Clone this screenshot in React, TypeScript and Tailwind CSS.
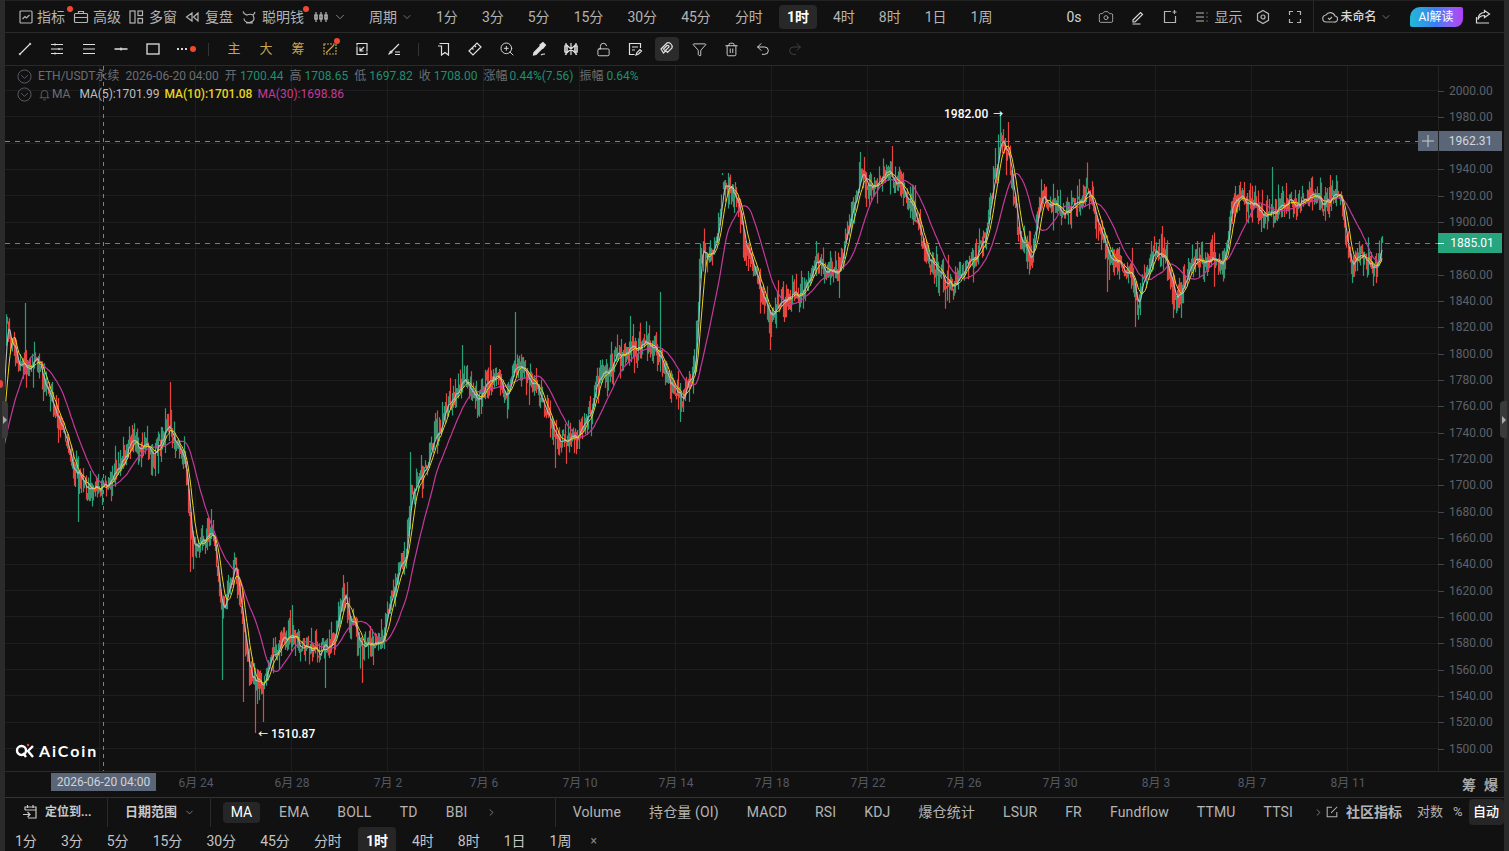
import { ReactNode } from 'react'
import { ChevronDown, ChevronRight, Undo2, Redo2, Trash2, Funnel, Camera, ZoomIn, LockOpen } from 'lucide-react'

// price path traced in page pixels
const PATH: [number, number][] = [
  [-30, 470], [0, 440], [6, 315], [12, 345], [22, 368], [35, 362], [50, 395], [62, 425], [75, 472], [92, 497], [110, 475], [130, 440], [150, 447], [170, 425], [185, 470], [192, 545], [212, 525], [222, 612], [235, 570], [250, 672], [262, 678], [275, 650], [292, 635], [310, 650], [330, 650], [343, 590], [360, 650], [380, 650], [392, 590], [405, 560], [412, 490], [425, 470], [445, 410], [465, 375], [478, 400], [495, 375], [505, 390], [520, 365], [535, 380], [555, 440], [570, 435], [585, 425], [600, 370], [630, 350], [655, 345], [670, 380], [682, 405], [695, 370], [700, 260], [715, 250], [723, 185], [738, 200], [745, 245], [760, 290], [770, 312], [785, 295], [800, 292], [815, 260], [838, 270], [860, 175], [875, 190], [890, 170], [910, 195], [925, 255], [945, 282], [960, 280], [985, 240], [1000, 140], [1008, 150], [1020, 240], [1032, 255], [1040, 200], [1065, 215], [1088, 195], [1110, 265], [1130, 265], [1137, 300], [1150, 255], [1165, 250], [1175, 295], [1190, 265], [1225, 260], [1232, 205], [1265, 215], [1290, 197], [1340, 195], [1350, 260], [1365, 255], [1373, 270], [1382, 245],
]

// wicks that stick out of the trace
const SPIKES: [number, number, number][] = [
  [25, 303, 1], [58, 398, 0], [78, 522, 1], [170, 382, 0], [190, 572, 0], [222, 680, 1], [243, 702, 0], [255, 733, 0], [263, 722, 0], [292, 605, 1], [325, 688, 1], [343, 575, 0], [362, 683, 0], [410, 452, 1], [462, 345, 1], [490, 345, 0], [515, 312, 1], [555, 468, 0], [630, 316, 1], [660, 292, 1], [680, 422, 1], [722, 175, 1], [770, 350, 0], [860, 152, 1], [892, 146, 0], [938, 293, 1], [1000, 112, 1], [1008, 122, 0], [1032, 268, 0], [1107, 292, 0], [1135, 327, 0], [1162, 226, 0], [1173, 318, 0], [1272, 167, 1], [1330, 175, 0], [1373, 286, 1],
]

const buildChart = () => {
  let seed = 7
  const rnd = () => {
    seed = (seed * 16807) % 2147483647
    return seed / 2147483647
  }
  const at = (x: number) => {
    for (let i = 1; i < PATH.length; i++) {
      if (x <= PATH[i][0]) {
        const [x0, y0] = PATH[i - 1]
        const [x1, y1] = PATH[i]
        return y0 + ((y1 - y0) * (x - x0)) / (x1 - x0)
      }
    }
    return PATH[PATH.length - 1][1]
  }
  const closes: number[] = []
  let wander = 0
  for (let x = -30; x <= 1382; x++) {
    wander = wander * 0.9 + (rnd() - 0.5) * 5
    closes.push(at(x) + wander + (rnd() - 0.5) * 15)
  }
  const ma = (n: number) => {
    let d = ''
    for (let i = 30; i < closes.length; i++) {
      const part = closes.slice(Math.max(0, i - n + 1), i + 1)
      const v = part.reduce((a, b) => a + b, 0) / part.length
      d += `${i === 30 ? 'M' : 'L'}${i - 30} ${v.toFixed(1)}`
    }
    return d
  }
  let green = ''
  let red = ''
  for (let i = 36; i < closes.length; i++) {
    const x = i - 30 + 0.5
    let top = Math.min(closes[i], closes[i - 1]) - rnd() * rnd() * 24
    let bottom = Math.max(closes[i], closes[i - 1]) + rnd() * rnd() * 24
    let isUp = closes[i] < closes[i - 1]
    const spike = SPIKES.find((s) => s[0] === i - 30)
    if (spike) {
      if (spike[1] < top) top = spike[1]
      else bottom = spike[1]
      isUp = spike[2] === 1
    }
    const seg = `M${x} ${top.toFixed(1)}V${bottom.toFixed(1)}`
    if (isUp) green += seg
    else red += seg
  }
  return { green, red, ma5: ma(5), ma10: ma(10), ma30: ma(30) }
}

const chart = buildChart()
const priceLabels = Array.from({ length: 26 }, (_, i) => 2000 - i * 20).filter((p) => p !== 1960 && p !== 1880)
const priceY = (p: number) => 90.5 + ((2000 - p) / 20) * 26.32
const dateLabels = ['6月 24', '6月 28', '7月 2', '7月 6', '7月 10', '7月 14', '7月 18', '7月 22', '7月 26', '7月 30', '8月 3', '8月 7', '8月 11']
const topPeriods = ['1分', '3分', '5分', '15分', '30分', '45分', '分时', '1时', '4时', '8时', '1日', '1周']
const subIndicators = ['Volume', '持仓量 (OI)', 'MACD', 'RSI', 'KDJ', '爆仓统计', 'LSUR', 'FR', 'Fundflow', 'TTMU', 'TTSI']

const Ico = ({ children, className = '' }: { children: ReactNode; className?: string }) => (
  <svg viewBox="0 0 16 16" fill="none" stroke="currentColor" strokeWidth="1.2" className={`w-4 h-4 shrink-0 ${className}`}>
    {children}
  </svg>
)

const Dot = ({ className }: { className: string }) => <span className={`absolute w-[6px] h-[6px] rounded-full bg-[#f0492e] ${className}`} />

const ToolBtn = ({ children, active }: { children: ReactNode; active?: boolean }) => (
  <div className="relative w-8 h-6 shrink-0 flex items-center justify-center text-[#e0e0e0]">
    {active && <span className="absolute left-1 top-0 w-6 h-6 rounded bg-[#2b2b2b]" />}
    <span className="relative">{children}</span>
  </div>
)

const Legend = ({ children }: { children: ReactNode }) => (
  <div className="flex items-center h-[18px] whitespace-nowrap">{children}</div>
)

const CircleDown = () => (
  <svg viewBox="0 0 16 16" fill="none" stroke="#5c6066" strokeWidth="1" className="w-[15px] h-[15px] shrink-0 mr-[6px]">
    <circle cx="8" cy="8" r="7" />
    <path d="M4.500 6.500 8 10l3.500-3.500" />
  </svg>
)

export default function App() {
  return (
    <div className="h-[851px] overflow-hidden bg-[#2a2a2a] px-[5px]" style={{ fontFamily: 'Roboto, "Noto Sans CJK SC", sans-serif' }}>
      <div className="w-full h-full bg-[#111111] flex flex-col text-[#b4b4b4] text-sm">
        {/* top bar */}
        <div className="h-[33px] shrink-0 flex items-center border-b border-[#2a2a2a] border-t border-t-[#222] pl-[13px] whitespace-nowrap">
          <div className="flex items-center relative">
            <Ico><rect x="2" y="2" width="12" height="12" rx="1" /><path d="M4.500 10 7 7.500l1.500 1.500L11.500 6" /></Ico>
            <span className="ml-[3px]">指标</span>
            <Dot className="left-[49px] -top-[1px]" />
          </div>
          <div className="flex items-center ml-[8px]">
            <Ico><rect x="1.500" y="4.500" width="13" height="9" rx="1" /><path d="M5.500 4.500V2.500h5v2M1.500 8.500h13" /></Ico>
            <span className="ml-[4px]">高级</span>
          </div>
          <div className="flex items-center ml-[7px]">
            <Ico><rect x="2" y="2" width="5" height="12" /><rect x="10" y="2" width="4.500" height="4.500" /><rect x="10" y="9.500" width="4.500" height="4.500" /></Ico>
            <span className="ml-[5px]">多窗</span>
          </div>
          <div className="flex items-center ml-[7px]">
            <Ico><path d="M8 4 2.500 8 8 12zM14 4 9.500 8l4.500 4z" /></Ico>
            <span className="ml-[5px]">复盘</span>
          </div>
          <div className="flex items-center relative ml-[8px]">
            <Ico><path d="M2 2.500c1 3 2.500 3 4 3.500 2-1 4-1 6 0 1-.5 1.500-1.500 2-3M3 9.500a5 4 0 0 0 10 0c0-1-.5-2-1-3M5 14h7" /></Ico>
            <span className="ml-[5px]">聪明钱</span>
            <Dot className="left-[62px] -top-[1px]" />
          </div>
          <Ico className="ml-[9px]"><path d="M3 3v10M8 3v10M13 3v10" /><rect x="1.800" y="6" width="2.400" height="4" /><rect x="6.800" y="6" width="2.400" height="4" /><rect x="11.800" y="6" width="2.400" height="4" /></Ico>
          <ChevronDown size={14} strokeWidth={1.4} className="ml-[4px] text-[#9a9a9a]" />
          <span className="ml-[22px]">周期</span>
          <ChevronDown size={12} strokeWidth={1.4} className="ml-[4px] text-[#9a9a9a]" />
          <div className="flex items-center gap-6 ml-[23px]">
            {topPeriods.map((p) => (
              <span key={p} className={p === '1时' ? 'h-6 px-2 -mx-2 rounded bg-[#282828] text-white font-bold flex items-center' : 'h-6 flex items-center'}>{p}</span>
            ))}
          </div>
          <span className="ml-[74px] text-[#d0d0d0]">0s</span>
          <Camera size={16} strokeWidth={1.3} className="ml-[16px]" />
          <Ico className="ml-[16px] text-[#d8d8d8]"><path d="m3 11 7.500-7.500 2 2L5 13H3zM2.500 15h8" /></Ico>
          <Ico className="ml-[16px]"><path d="M9 2.500H2.500v11h11V7M12.500 1v4M10.500 3h4" /></Ico>
          <Ico className="ml-[16px]"><path d="M2 4h8M2 8h8M2 12h8M12.500 4h1M12.500 8h1M12.500 12h1" /></Ico>
          <span className="ml-[5px]">显示</span>
          <Ico className="ml-[12px]"><path d="m8 1.500 5.500 3.200v6.600L8 14.500l-5.500-3.200V4.700z" /><circle cx="8" cy="8" r="2" /></Ico>
          <Ico className="ml-[16px]"><path d="M2.500 6V2.500H6M10 2.500h3.500V6M13.500 10v3.500H10M6 13.500H2.500V10" /></Ico>
          <div className="ml-[10px] h-full border-l border-[#2a2a2a]" />
          <Ico className="ml-[8px]"><path d="M4.500 13a3.500 3.500 0 0 1-.5-7 5 5 0 0 1 9 1 3 3 0 0 1-1 6zM6 9l1.500 1.500L10 8" /></Ico>
          <span className="ml-[3px] text-xs font-medium text-[#d8d8d8]">未命名</span>
          <ChevronDown size={12} strokeWidth={1.4} className="ml-[3px] text-[#9a9a9a]" />
          <span className="ml-[18px] w-[53px] h-5 rounded-tl-[10px] rounded-br-[8px] rounded-tr-[2px] rounded-bl-[2px] bg-linear-to-r from-[#22b8d6] via-[#3a7cf2] to-[#b23cf5] text-white text-xs flex items-center justify-center">AI解读</span>
          <Ico className="ml-[12px] text-[#d8d8d8]"><path d="M9.500 1.500 14.500 5l-5 3.500V6.500C6 6.500 4 8 3 10.500 3 6.500 5.500 3.500 9.500 3.500zM1.500 8v6h12.500" /></Ico>
        </div>

        {/* drawing tools */}
        <div className="h-[33px] shrink-0 flex items-center border-b border-[#2a2a2a] pl-1">
          <ToolBtn><Ico><path d="M3 13 13 3M2 12.500l1.500 1.500M12.500 2 14 3.500" /></Ico></ToolBtn>
          <ToolBtn><Ico><path d="M2 3.500h12M2 8h12M2 12.500h12M6 2.500v2M10 7v2M6 11.500v2" /></Ico></ToolBtn>
          <ToolBtn><Ico><path d="M2 3.500h12M2 8h12M2 12.500h12" /></Ico></ToolBtn>
          <ToolBtn><Ico><path d="M1.500 8h13M8 6.500v3" strokeWidth="1.300" /></Ico></ToolBtn>
          <ToolBtn><Ico><rect x="2" y="3" width="12" height="10" strokeWidth="1.300" /></Ico></ToolBtn>
          <div className="relative w-8 h-6 shrink-0 flex items-center justify-center gap-[2px] pl-[3px] text-[#d6d6d6]">
            <span className="w-[2px] h-[2px] bg-[#d6d6d6]" /><span className="w-[2px] h-[2px] bg-[#d6d6d6]" /><span className="w-[2px] h-[2px] bg-[#d6d6d6]" />
            <span className="ml-[1px] w-[6px] h-[6px] rounded-full bg-[#f0492e]" />
          </div>
          <div className="ml-[7px] mr-[9px] h-[13px] border-l border-[#333]" />
          <div className="w-8 text-center text-[13px] text-[#c9a24d]">主</div>
          <div className="w-8 text-center text-[13px] text-[#c9a24d]">大</div>
          <div className="w-8 text-center text-[13px] text-[#c9a24d]">筹</div>
          <ToolBtn>
            <Ico className="text-[#c9a24d]"><rect x="2" y="3" width="12" height="10" strokeDasharray="2 1" /><path d="m4 12 8-8" /></Ico>
            <Dot className="-right-[2px] -top-[3px]" />
          </ToolBtn>
          <ToolBtn><Ico><path d="M3 4.500V2.500h10v8M13 11.500v2H3v-8M6 10l4-4M6 6.500V10h3.500" /></Ico></ToolBtn>
          <ToolBtn><Ico><path d="M13 3 2.500 13.500M9 11h5M9 13.500h5" /><circle cx="5" cy="11" r="1" /></Ico></ToolBtn>
          <div className="ml-[8px] mr-[8px] h-[13px] border-l border-[#333]" />
          <ToolBtn><Ico><path d="M4.500 2.500h9V14L10 11.500 6.500 14V5H3" /></Ico></ToolBtn>
          <ToolBtn><Ico><path d="m2 10 8-8 4 4-8 8zM5 7l1.500 1.500M7.500 4.500 9 6" /></Ico></ToolBtn>
          <ToolBtn><ZoomIn size={16} strokeWidth={1.4} /></ToolBtn>
          <ToolBtn><Ico><path d="m9 4 3-2.500 2.500 2.500L12 7zM9.500 5 3 11.500 2.500 14l2.500-.5L11.500 7z" fill="currentColor" /><path d="M10 14c1-1 2-1 4-1" /></Ico></ToolBtn>
          <ToolBtn><Ico><path d="M3 2v12M8 2v12M13 2v12M2 2.500l12 11M14 2.500l-12 11" /><rect x="1.800" y="5" width="2.400" height="6" /><rect x="11.800" y="5" width="2.400" height="6" /></Ico></ToolBtn>
          <ToolBtn><LockOpen size={15} strokeWidth={1.4} /></ToolBtn>
          <ToolBtn><Ico><path d="M13.500 7V2.500h-11v11h5M5 6h6M5 9h3M9 14l1-2.500 3-3 1.500 1.500-3 3z" /></Ico></ToolBtn>
          <ToolBtn active><Ico><path d="m2 8 6-6c2-1.500 6 1.500 5 5L8.500 11.500 6.500 9.500 10 6c.5-1-1-2-2-1.500L4.500 8l2 2L4.500 12z" /></Ico></ToolBtn>
          <ToolBtn><Funnel size={15} strokeWidth={1.4} /></ToolBtn>
          <ToolBtn><Trash2 size={15} strokeWidth={1.4} /></ToolBtn>
          <ToolBtn><Undo2 size={16} strokeWidth={1.4} /></ToolBtn>
          <div className="relative w-8 h-6 shrink-0 flex items-center justify-center text-[#444]"><Redo2 size={16} strokeWidth={1.4} /></div>
        </div>

        {/* chart canvas */}
        <div className="relative h-[705px] shrink-0">
          <svg viewBox="5 66 1499 705" className="absolute inset-0 w-full h-full">
            <g stroke="#1e1e20" strokeWidth="1">
              {Array.from({ length: 26 }, (_, i) => (
                <path key={i} d={`M5 ${Math.round(90 + i * 26.32) + 0.5}H1438`} />
              ))}
              {Array.from({ length: 14 }, (_, i) => (
                <path key={i} d={`M${99.5 + i * 96} 66V771`} />
              ))}
            </g>
            <path d="M1438.500 66V771" stroke="#232323" />
            <g stroke="#44484e" strokeWidth="1">
              {priceLabels.map((p) => (
                <path key={p} d={`M1438 ${Math.round(priceY(p)) + 0.5}h6`} />
              ))}
            </g>
            <path d={chart.green} stroke="#26a17b" strokeWidth="1.200" />
            <path d={chart.red} stroke="#e5443f" strokeWidth="1.200" />
            <path d={chart.ma30} stroke="#c5399c" strokeWidth="1.200" fill="none" />
            <path d={chart.ma5} stroke="#b4b9b9" strokeWidth="1.100" fill="none" />
            <path d={chart.ma10} stroke="#e8d51e" strokeWidth="1" fill="none" />
            <path d="M103.500 66V771" stroke="#7d8188" strokeDasharray="4 4" />
            <path d="M5 141.500H1418" stroke="#7d8188" strokeDasharray="5 5" />
            <path d="M5 243.500H1438" stroke="#24a67f" strokeDasharray="5 5" />
          </svg>

          {/* ohlc legend */}
          <div className="absolute left-[12px] top-[1px] text-xs">
            <Legend>
              <CircleDown />
              <span className="text-[#6a6e74]">ETH/USDT永续</span>
              <span className="ml-[6px] text-[#6a6e74]">2026-06-20 04:00</span>
              <span className="ml-[6px] text-[#6a6e74]">开</span><span className="ml-[3px] text-[#1f8f70]">1700.44</span>
              <span className="ml-[6px] text-[#6a6e74]">高</span><span className="ml-[3px] text-[#1f8f70]">1708.65</span>
              <span className="ml-[6px] text-[#6a6e74]">低</span><span className="ml-[3px] text-[#1f8f70]">1697.82</span>
              <span className="ml-[6px] text-[#6a6e74]">收</span><span className="ml-[3px] text-[#1f8f70]">1708.00</span>
              <span className="ml-[6px] text-[#6a6e74]">涨幅</span><span className="ml-[2px] text-[#1f8f70]">0.44%(7.56)</span>
              <span className="ml-[6px] text-[#6a6e74]">振幅</span><span className="ml-[3px] text-[#1f8f70]">0.64%</span>
            </Legend>
            <Legend>
              <CircleDown />
              <svg viewBox="0 0 16 16" fill="none" stroke="#6a6e74" className="w-[13px] h-[13px]"><path d="M2 12h12M4 12V7a4 4 0 0 1 8 0v5M6.500 14.500h3" /></svg>
              <span className="ml-[1px] text-[#6a6e74]">MA</span>
              <span className="ml-[9px] text-[#bdbdbd]">MA(5):1701.99</span>
              <span className="ml-[5px] text-[#e8d51e] font-medium">MA(10):1701.08</span>
              <span className="ml-[5px] text-[#c5399c]">MA(30):1698.86</span>
            </Legend>
          </div>

          {/* price axis */}
          {priceLabels.map((p) => (
            <span key={p} className="absolute left-[1444px] text-xs leading-4 text-[#5e626a]" style={{ top: priceY(p) - 74 }}>
              {p.toFixed(2)}
            </span>
          ))}
          <div className="absolute left-[1413px] top-[65px] w-5 h-5 bg-[#5a6678] text-[#c8ccd2] flex items-center justify-center">
            <svg viewBox="0 0 12 12" stroke="currentColor" className="w-3 h-3"><path d="M0 6h12M6 0v12" /></svg>
          </div>
          <div className="absolute left-[1434px] top-[65px] w-[63px] h-5 bg-[#5a6678] text-[#d4d7dc] text-xs flex items-center justify-center">1962.31</div>
          <div className="absolute left-[1433px] top-[167px] w-[64px] h-5 bg-[#26a57f] text-white text-xs flex items-center justify-center pl-1">1885.01</div>
          <span className="absolute left-[1433px] top-[177px] w-[6px] h-px bg-white" />

          {/* extreme marks */}
          <div className="absolute left-[939px] top-[40px] text-xs font-medium text-white whitespace-nowrap">1982.00 <span className="ml-[2px] text-[10px]">→</span></div>
          <div className="absolute left-[253px] top-[660px] text-xs font-medium text-white whitespace-nowrap"><span className="text-[10px]">←</span> 1510.87</div>

          {/* watermark */}
          <div className="absolute left-[10px] top-[675px] flex items-center gap-[4px] text-white">
            <svg viewBox="0 0 20 16" className="w-5 h-4" fill="none" stroke="#fff" strokeWidth="2.400">
              <circle cx="6.500" cy="7.500" r="4.500" />
              <path d="m8 10 3 4M18 3l-5 5 5 6" />
              <circle cx="13" cy="2" r="1.200" fill="#f0492e" stroke="none" />
            </svg>
            <span className="font-bold text-base tracking-[0.12em] leading-5" style={{ fontFamily: 'Lato, sans-serif' }}>AiCoin</span>
          </div>

          {/* side handles */}
          <div className="absolute -left-[5px] top-[314px] w-[3px] h-[8px] rounded-r bg-[#e5443f]" />
          <div className="absolute -left-[3px] top-[335px] w-[6px] h-[37px] rounded-r bg-[#3a3a3a] flex items-center justify-center">
            <span className="border-y-[4px] border-y-transparent border-l-[4px] border-l-[#aaa]" />
          </div>
          <div className="absolute left-[1495px] top-[335px] w-[7px] h-[37px] rounded-l bg-[#3a3a3a] flex items-center justify-center">
            <span className="border-y-[4px] border-y-transparent border-l-[4px] border-l-[#aaa]" />
          </div>
        </div>

        {/* time axis */}
        <div className="relative h-[26px] shrink-0 flex items-center border-t border-[#2a2a2a] text-xs text-[#535967] pl-[143px]">
          <div className="absolute left-[46px] top-[1px] w-[105px] h-[18px] bg-[#5a6678] text-[#d0d3d8] flex items-center justify-center">2026-06-20 04:00</div>
          {dateLabels.map((d) => (
            <span key={d} className="w-24 shrink-0 text-center -mt-[4px]">{d}</span>
          ))}
          <span className="ml-auto mr-[6px] flex gap-2 text-sm font-bold text-[#a8a8a8]"><span>筹</span><span>爆</span></span>
        </div>

        {/* indicator row */}
        <div className="h-[30px] shrink-0 flex items-center border-t border-[#333] whitespace-nowrap pl-[17px] pb-[1px]">
          <Ico className="text-[#c8c8c8]"><path d="M3 6V3h11v11H6M1 10.500h7M5.500 8 8 10.500 5.500 13M5.500 1v3M11 1v3M3 6h11" /></Ico>
          <span className="ml-[7px] w-[48px] text-xs font-bold text-[#c8c8c8]">定位到...</span>
          <div className="ml-[14px] h-[30px] border-l border-[#2a2a2a]" />
          <span className="ml-[17px] w-[52px] text-[13px] font-bold text-[#c8c8c8]">日期范围</span>
          <ChevronDown size={11} strokeWidth={1.4} className="ml-[7px]" />
          <div className="ml-[15px] h-[30px] border-l border-[#2a2a2a]" />
          <span className="ml-[12px] h-[21px] w-[37px] rounded bg-[#262626] text-white flex items-center justify-center">MA</span>
          <div className="ml-[19px] flex items-center gap-7 tracking-[0.25px]">
            <span>EMA</span>
            <span>BOLL</span>
            <span>TD</span>
            <span>BBI</span>
          </div>
          <ChevronRight size={11} strokeWidth={1.4} className="ml-[18px]" />
          <div className="ml-[58px] h-[30px] border-l border-[#2a2a2a]" />
          <div className="ml-[17px] flex items-center gap-7 tracking-[0.15px]">
            {subIndicators.map((s) => <span key={s}>{s}</span>)}
          </div>
          <ChevronRight size={11} strokeWidth={1.4} className="ml-[20px]" />
          <Ico className="ml-[1px] w-[14px] h-[14px]"><path d="M8 2.500H2.500v11h11V8M7 9l7-7" /></Ico>
          <span className="ml-[7px] font-bold">社区指标</span>
          <span className="ml-[15px] text-[13px]">对数</span>
          <span className="ml-[10px] text-[13px]">%</span>
          <span className="ml-[6px] h-[26px] w-[35px] rounded bg-[#262626] text-white text-[13px] font-medium flex items-center justify-center">自动</span>
        </div>

        {/* period shortcuts */}
        <div className="flex-1 flex items-end pl-[10px] text-[#c4c4c4] whitespace-nowrap gap-6">
          {topPeriods.map((p) => (
            <span key={p} className={p === '1时' ? 'h-[25px] px-2 -mx-2 pt-[3px] rounded-t bg-[#262626] text-white font-bold flex items-center' : 'h-[25px] pt-[3px] flex items-center'}>{p}</span>
          ))}
          <span className="h-[25px] pt-[3px] flex items-center text-xs text-[#888] -ml-[5px]">×</span>
        </div>
      </div>
    </div>
  )
}
